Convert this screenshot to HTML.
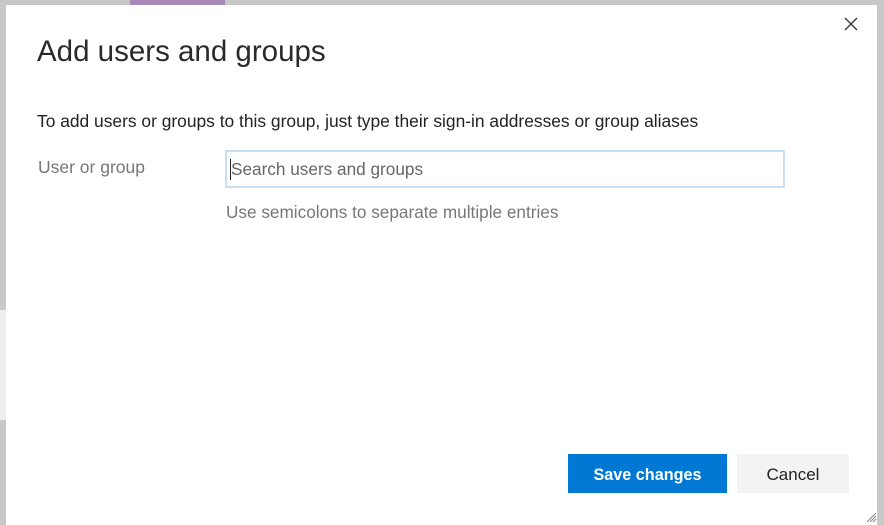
<!DOCTYPE html>
<html><head><style>
body{margin:0;width:884px;height:525px;background:#c8c8c8;position:relative;overflow:hidden;font-family:"Segoe UI","Liberation Sans",sans-serif;}
.blob{position:absolute;left:130px;top:0;width:95px;height:6px;background:#a88ab8;}
.dlg{position:absolute;left:6px;top:5px;width:871px;height:520px;background:#fff;}
.t{position:absolute;left:31px;top:30px;font-size:29.5px;font-weight:300;color:#2a2a2a;}
.d{position:absolute;left:31px;top:106px;font-size:17.4px;color:#222}
.l{position:absolute;left:32px;top:152px;font-size:17.5px;color:#777}
.in{position:absolute;left:219px;top:145px;width:556px;height:34px;border:2px solid #c7dff3;}
.in span{position:absolute;left:3px;top:7px;font-size:17.2px;color:#666;border-left:1px solid #222;}
.h{position:absolute;left:220px;top:197px;font-size:17.2px;color:#777}
.b1{position:absolute;left:562px;top:449px;width:159px;height:39px;background:#0078d4;color:#fff;font-size:16.2px;font-weight:bold;text-align:center;line-height:42px}
.b2{position:absolute;left:731px;top:449px;width:112px;height:39px;background:#f3f3f3;color:#222;font-size:17px;text-align:center;line-height:42px}
.x{position:absolute;left:838px;top:12px}
.g{position:absolute;left:0;top:310px;width:6px;height:110px;background:#eee;}
</style></head><body>
<div class="blob"></div><div class="g"></div>
<div class="dlg">
<div class="t">Add users and groups</div>
<div class="d">To add users or groups to this group, just type their sign-in addresses or group aliases</div>
<div class="l">User or group</div>
<div class="in"><span>Search users and groups</span></div>
<div class="h">Use semicolons to separate multiple entries</div>
<div class="b1">Save changes</div>
<div class="b2">Cancel</div>
<svg class="x" width="14" height="14"><path d="M1 1L13 13M13 1L1 13" stroke="#333" stroke-width="1.3"/></svg>
<svg style="position:absolute;right:0;bottom:2px" width="12" height="12"><path d="M11 2L2 11M11 5L5 11M11 8L8 11" stroke="#888" stroke-width="1"/></svg>
</div>
</body></html>
